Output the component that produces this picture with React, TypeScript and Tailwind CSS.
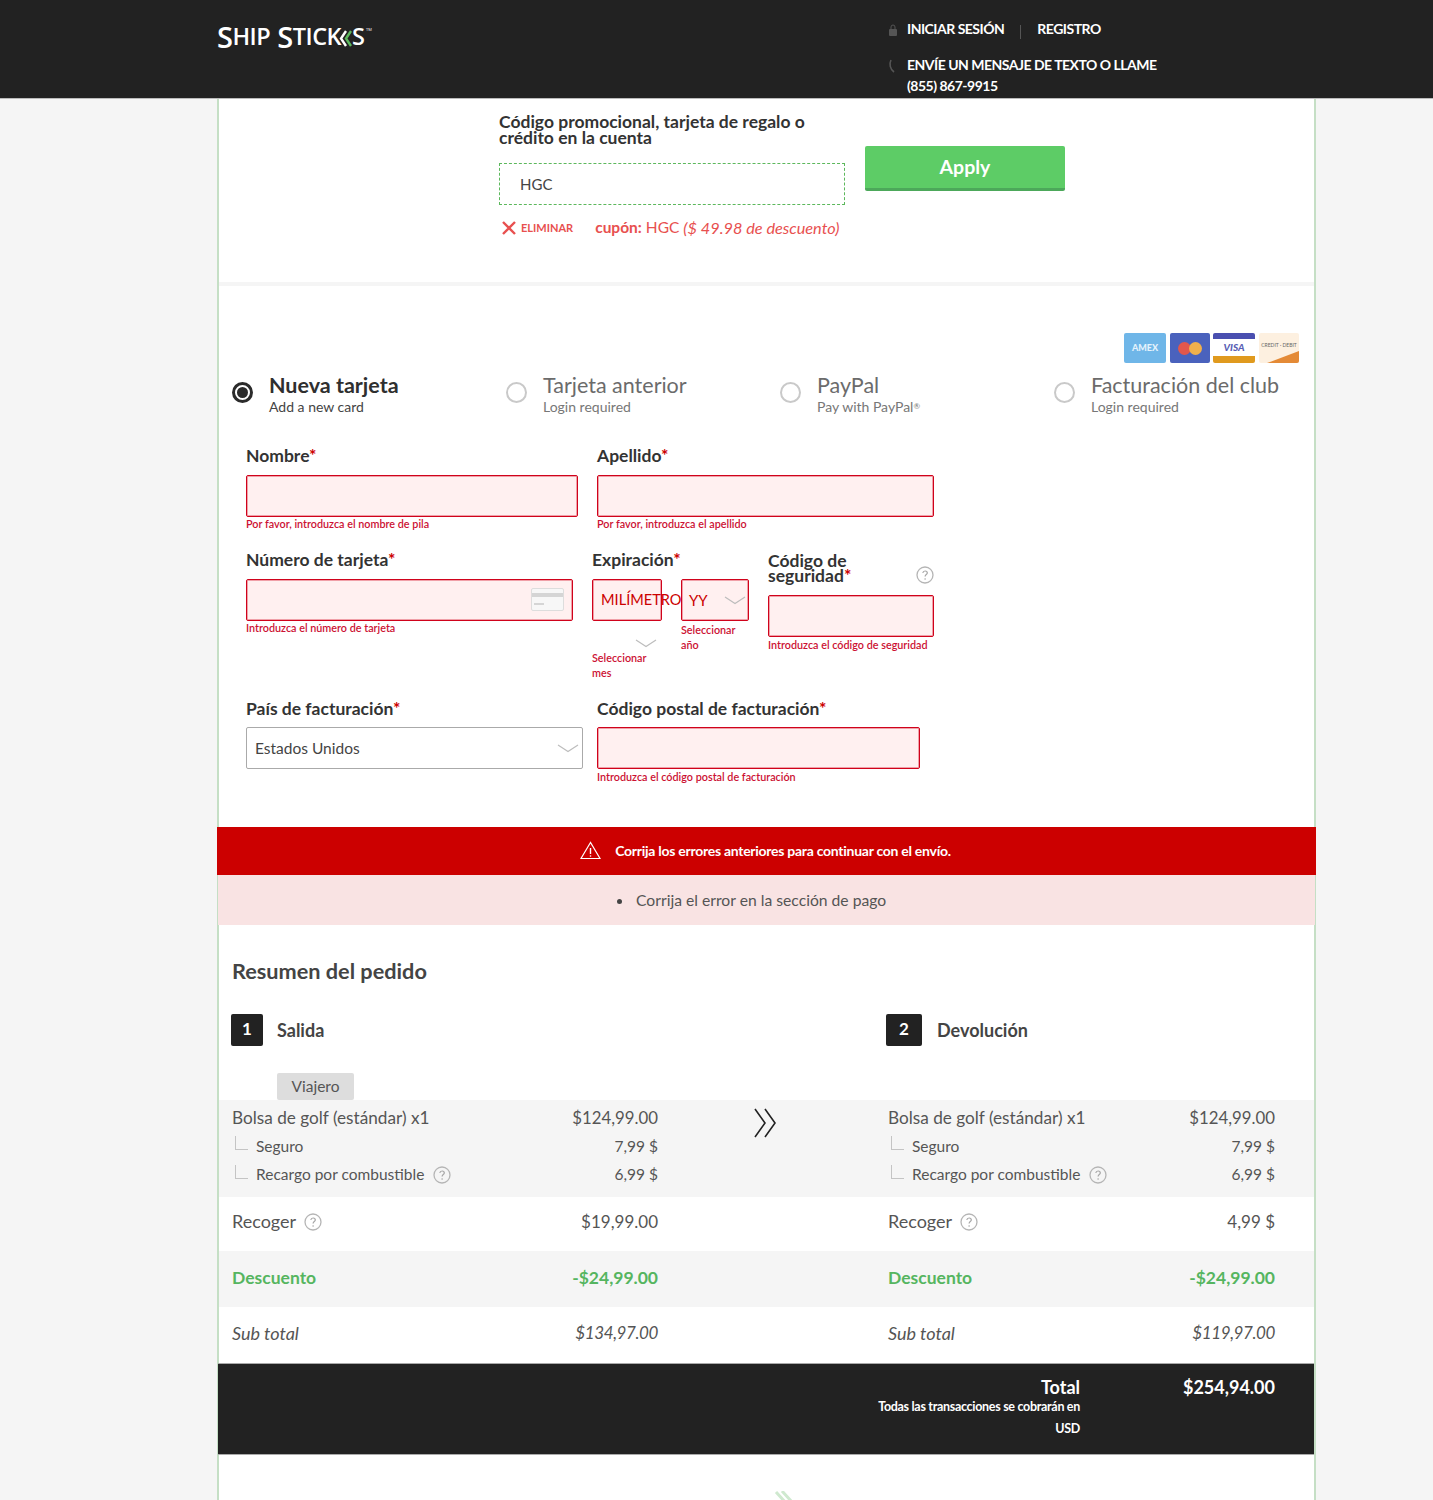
import React from 'react';

const font = { fontFamily: 'Lato, "Open Sans", sans-serif' };

const Help = ({ size = 18 }: { size?: number }) => (
  <svg width={size} height={size} viewBox="0 0 18 18" fill="none" className="shrink-0">
    <circle cx="9" cy="9" r="8" stroke="#b5b5b5" strokeWidth="1.3" />
    <path d="M6.8 7c.2-1.3 1.1-2 2.3-2 1.3 0 2.2.8 2.2 1.9 0 1.7-2.2 1.7-2.2 3.6" stroke="#a5a5a5" strokeWidth="1.2" />
    <circle cx="9.1" cy="13" r=".8" fill="#a5a5a5" />
  </svg>
);

const Caret = ({ className = '' }: { className?: string }) => (
  <svg width="22" height="9" viewBox="0 0 22 9" fill="none" className={className}>
    <path d="M1 1l10 6.5L21 1" stroke="#bdbdbd" strokeWidth="1.2" />
  </svg>
);

const Radio = ({ on, title, sub }: { on?: boolean; title: string; sub: React.ReactNode }) => (
  <div className="flex w-[274px] shrink-0 items-start last:w-auto">
    <div className="mt-[8px] flex h-[22px] w-[22px] shrink-0 items-center justify-center">
      {on ? (
        <span className="flex h-[21px] w-[21px] items-center justify-center rounded-full border-[3px] border-[#2b2b2b]">
          <span className="h-[11px] w-[11px] rounded-full bg-[#2b2b2b]" />
        </span>
      ) : (
        <span className="h-[21px] w-[21px] rounded-full border-2 border-[#c9c9c9]" />
      )}
    </div>
    <div className="ml-[16px]">
      <div className={on ? 'text-[21.5px] leading-[24px] font-bold text-[#2f2f2f]' : 'text-[21.5px] leading-[24px] text-[#6b6b6b]'}>{title}</div>
      <div className={on ? 'mt-[2px] h-[16px] text-[14px] leading-[16px] text-[#444]' : 'mt-[2px] h-[16px] text-[14px] leading-[16px] text-[#777]'}>{sub}</div>
    </div>
  </div>
);

const Label = ({ children, className = '' }: { children: React.ReactNode; className?: string }) => (
  <div className={`text-[17.5px] leading-[15px] font-bold text-[#333] ${className}`}>
    {children}
    <span className="text-[#cc0000]">*</span>
  </div>
);

const Err = ({ children, className = '' }: { children: React.ReactNode; className?: string }) => (
  <div className={`text-[10.8px] leading-[15px] font-semibold text-[#cc1133] ${className}`}>{children}</div>
);

const BadInput = ({ className = '', children }: { className?: string; children?: React.ReactNode }) => (
  <div className={`relative h-[42px] rounded-[2px] border border-[#d0021b] bg-[#fff0f0] shadow-[inset_0_0_0_1px_#f0a0a8] ${className}`}>{children}</div>
);

const Row = ({ left, right, mid, className = '' }: { left: React.ReactNode; right: React.ReactNode; mid?: React.ReactNode; className?: string }) => (
  <div className={`flex items-start pl-[13px] ${className}`}>
    <div className="w-[426px]">{left}</div>
    <div className="flex w-[230px] justify-center pr-[16px]">{mid}</div>
    <div className="w-[387px]">{right}</div>
  </div>
);

const Line = ({ label, value, cls = '' }: { label: React.ReactNode; value: string; cls?: string }) => (
  <div className={`flex items-center justify-between ${cls}`}>
    <div className="flex items-center">{label}</div>
    <div>{value}</div>
  </div>
);

const Elbow = () => (
  <span className="mr-[8px] mb-[7px] ml-[3px] inline-block h-[14px] w-[13px] border-b border-l border-[#c4c4c4]" />
);

const Bag = () => (
  <div className="text-[#555]">
    <Line label={<span className="text-[17.2px]">Bolsa de golf (estándar) x1</span>} value="$124,99.00" cls="h-[36px] text-[16.8px]" />
    <Line label={<><Elbow />Seguro</>} value="7,99 $" cls="h-[21px] text-[15.5px]" />
    <Line label={<><Elbow />Recargo por combustible<span className="ml-[9px]"><Help /></span></>} value="6,99 $" cls="h-[36px] text-[15.5px]" />
  </div>
);

const Pickup = ({ value }: { value: string }) => (
  <Line label={<><span className="text-[18px]">Recoger</span><span className="ml-[8px]"><Help /></span></>} value={value} cls="h-[49px] text-[17px] text-[#555]" />
);

const Discount = () => (
  <Line label="Descuento" value="-$24,99.00" cls="h-[54px] text-[17.5px] font-bold text-[#55b560]" />
);

const Sub = ({ value }: { value: string }) => (
  <Line label={<span className="text-[18px] tracking-normal">Sub total</span>} value={value} cls="h-[52px] text-[17px] tracking-[-0.4px] italic text-[#555]" />
);

const Step = ({ n, label, box = 'w-[32px]' }: { n: string; label: string; box?: string }) => (
  <div className="flex items-center">
    <span className={`flex h-[32px] items-center justify-center rounded-[2px] bg-[#222] pb-[3px] text-[17px] font-bold text-white ${box}`}>{n}</span>
    <span className="mt-[1px] ml-[14px] text-[18px] font-bold text-[#444]">{label}</span>
  </div>
);

const Logo = () => (
  <div className="flex items-center text-white" style={{ fontFamily: '"Open Sans", sans-serif' }}>
    <span className="text-[29px] leading-none font-semibold tracking-[-0.5px]">S</span>
    <span className="text-[23.5px] leading-none font-semibold tracking-[-0.5px]">HIP</span>
    <span className="ml-[7px] text-[29px] leading-none font-semibold tracking-[-0.5px]">S</span>
    <span className="text-[23.5px] leading-none font-semibold tracking-[-0.5px]">TICK</span>
    <svg width="13" height="17" viewBox="0 0 13 17" fill="none" className="mt-[3px] -ml-[2px]">
      <path d="M7 1L2 8.5 7 16" stroke="#fff" strokeWidth="2.4" />
      <path d="M12 1L7 8.5l5 7.5" stroke="#5cb85c" strokeWidth="2.4" />
    </svg>
    <span className="text-[23.5px] leading-none font-semibold">S</span>
    <span className="mb-[14px] ml-[1px] text-[4px] leading-none">TM</span>
  </div>
);

const Cards = () => (
  <div className="flex justify-end pr-[15px]">
    <div className="flex h-[30px] w-[42px] items-center justify-center rounded-[2px] bg-[#6fb6e8] text-[9px] font-black text-[#e4f2fc]">AMEX</div>
    <div className="ml-[4px] flex h-[30px] w-[40px] items-center justify-center rounded-[2px] bg-[#4a62bd]">
      <span className="h-[13px] w-[13px] rounded-full bg-[#e2574c]" />
      <span className="-ml-[2px] h-[13px] w-[13px] rounded-full bg-[#f0b04c]" />
    </div>
    <div className="ml-[3px] flex h-[30px] w-[42px] flex-col overflow-hidden rounded-[2px]">
      <span className="h-[6px] bg-[#4a4fb0]" />
      <span className="flex flex-1 items-center justify-center bg-white text-[10px] font-black text-[#5a5fb5] italic">VISA</span>
      <span className="h-[7px] bg-[#e09a1e]" />
    </div>
    <div className="relative ml-[4px] flex h-[30px] w-[40px] justify-center overflow-hidden rounded-[2px] bg-[#fdf0e0] pt-[9px] text-[5px] leading-[6px] text-[#666]">
      CREDIT · DEBIT
      <svg width="40" height="16" viewBox="0 0 40 16" className="absolute right-0 bottom-0">
        <path d="M8 16L40 4v12z" fill="#e48a36" />
      </svg>
    </div>
  </div>
);

export default function App() {
  return (
    <div className="min-h-[1500px] overflow-hidden bg-[#f5f5f5]" style={font}>
      <header className="flex h-[99px] justify-between border-b border-[#bbb] bg-[#222] pl-[217px] text-white">
        <div className="pt-[22px]"><Logo /></div>
        <div className="w-[546px] text-[14px] font-bold tracking-[-0.5px]">
          <div className="mt-[20px] flex h-[17px] items-center">
            <svg width="10" height="12" viewBox="0 0 10 12" className="mt-[3px] mr-[9px] ml-[1px]">
              <rect x="1" y="5" width="8" height="7" rx="1" fill="#555" />
              <path d="M3 5V3a2 2 0 014 0v2" stroke="#555" fill="none" />
            </svg>
            <span>INICIAR SESIÓN</span>
            <span className="mx-[16px] mt-[7px] h-[14px] w-px bg-[#555]" />
            <span>REGISTRO</span>
          </div>
          <div className="mt-[19px] flex h-[17px] items-center">
            <svg width="10" height="14" viewBox="0 0 10 14" fill="none" className="mt-[2px] mr-[9px] ml-[1px]">
              <path d="M3 1C1 5 2 10 6 13" stroke="#555" strokeWidth="1.6" />
            </svg>
            <span>ENVÍE UN MENSAJE DE TEXTO O LLAME</span>
          </div>
          <div className="mt-[4px] pl-[20px] leading-[18px]">(855) 867-9915</div>
        </div>
      </header>

      <main className="mx-[217px] h-[1401px] w-[1099px] border-x-2 border-[#c5dfc5] bg-white">
        {/* cupon */}
        <section className="flex h-[187px] border-b-4 border-[#f5f5f5] pl-[280px]">
          <div className="w-[346px] pt-[15px]">
            <div className="text-[17.5px] leading-[16px] font-bold text-[#333]">Código promocional, tarjeta de regalo o crédito en la cuenta</div>
            <div className="mt-[17px] flex h-[42px] items-center border border-dashed border-[#5cb85c] pl-[20px] text-[15px] text-[#444]">HGC</div>
            <div className="mt-[13px] flex h-[20px] items-center text-[15.5px] whitespace-nowrap text-[#e8504f]">
              <svg width="16" height="16" viewBox="0 0 16 16" fill="none" className="ml-[2px]">
                <path d="M2 2l12 12M14 2L2 14" stroke="#e8504f" strokeWidth="2.4" />
              </svg>
              <span className="ml-[4px] text-[11px] font-bold">ELIMINAR</span>
              <span className="ml-[22px] font-bold">cupón:</span>
              <span className="ml-[4px]">HGC</span>
              <span className="ml-[4px] text-[16.3px] italic">($ 49.98 de descuento)</span>
            </div>
          </div>
          <div className="mt-[47px] ml-[20px] flex h-[45px] w-[200px] items-center justify-center rounded-[2px] border-b-[3px] border-[#4ca85a] bg-[#5dcc66] text-[19.5px] font-bold text-white">Apply</div>
        </section>

        {/* pago */}
        <section className="h-[541px] pt-[47px]">
          <Cards />
          <div className="mt-[10px] flex pl-[12px]">
            <Radio on title="Nueva tarjeta" sub="Add a new card" />
            <Radio title="Tarjeta anterior" sub="Login required" />
            <Radio title="PayPal" sub={<>Pay with PayPal<span className="relative -top-[3px] text-[8px]">®</span></>} />
            <Radio title="Facturación del club" sub="Login required" />
          </div>

          <div className="mt-[33px] flex pl-[27px]">
            <div className="w-[332px]">
              <Label className="h-[27px]">Nombre</Label>
              <BadInput />
              <Err className="-mt-[1px]">Por favor, introduzca el nombre de pila</Err>
            </div>
            <div className="ml-[19px] w-[337px]">
              <Label className="h-[27px]">Apellido</Label>
              <BadInput />
              <Err className="-mt-[1px]">Por favor, introduzca el apellido</Err>
            </div>
          </div>

          <div className="mt-[21px] flex pl-[27px]">
            <div className="w-[327px]">
              <Label className="h-[27px]">Número de tarjeta</Label>
              <BadInput>
                <div className="absolute top-[8px] right-[8px] h-[23px] w-[33px] rounded-[2px] border border-[#ddd] bg-[#f7f7f7]">
                  <div className="mt-[4px] h-[4px] bg-[#d5d5d5]" />
                  <div className="mt-[6px] ml-[2px] h-[2px] w-[10px] bg-[#d5d5d5]" />
                </div>
              </BadInput>
              <Err className="-mt-[1px]">Introduzca el número de tarjeta</Err>
            </div>
            <div className="ml-[19px] flex w-[157px] flex-col">
              <Label className="h-[27px]">Expiración</Label>
              <div className="flex items-start">
                <div className="w-[70px]">
                  <BadInput className="flex items-center pl-[8px] text-[14.6px] whitespace-nowrap text-[#cc0000]">MILÍMETRO</BadInput>
                  <div className="flex justify-end pt-[18px] pr-[5px]"><Caret /></div>
                  <Err className="mt-[2px]">Seleccionar mes</Err>
                </div>
                <div className="ml-[19px] w-[68px]">
                  <BadInput className="flex items-center justify-between pr-[2px] pl-[7px] text-[15px] text-[#cc0000]">YY<Caret /></BadInput>
                  <Err className="mt-[1px]">Seleccionar año</Err>
                </div>
              </div>
            </div>
            <div className="ml-[19px] w-[166px]">
              <div className="flex h-[43px] items-center justify-between">
                <Label className="-mt-[11px] w-[110px]">Código de seguridad</Label>
                <span className="mt-[2px]"><Help /></span>
              </div>
              <BadInput />
              <Err>Introduzca el código de seguridad</Err>
            </div>
          </div>

          <div className="mt-[21px] flex pl-[27px]">
            <div className="w-[337px]">
              <Label className="h-[26px]">País de facturación</Label>
              <div className="flex h-[42px] items-center justify-between rounded-[2px] border border-[#aaa] pt-[1px] pr-[3px] pl-[8px] text-[15.5px] text-[#444]">Estados Unidos<Caret /></div>
            </div>
            <div className="ml-[14px] w-[323px]">
              <Label className="h-[26px]">Código postal de facturación</Label>
              <BadInput />
              <Err>Introduzca el código postal de facturación</Err>
            </div>
          </div>
        </section>

        {/* errores */}
        <div className="-mx-[2px] flex h-[48px] items-center justify-center bg-[#cc0000] pr-[2px] pb-[1px] text-[14px] font-bold tracking-[-0.27px] text-white">
          <svg width="21" height="19" viewBox="0 0 21 19" fill="none" className="mr-[14px]">
            <path d="M10.5 1.5L1 17.5h19z" stroke="#fff" strokeWidth="1.2" />
            <path d="M10.5 7v6" stroke="#fff" strokeWidth="1.4" />
            <circle cx="10.5" cy="15" r=".8" fill="#fff" />
          </svg>
          Corrija los errores anteriores para continuar con el envío.
        </div>
        <div className="-mx-[1px] flex h-[50px] items-center bg-[#f9e3e3] pt-[2px] pl-[399px] text-[15.7px] text-[#555]">
          <span className="mr-[14px] h-[5px] w-[5px] rounded-full bg-[#444]" />
          Corrija el error en la sección de pago
        </div>

        {/* resumen */}
        <section>
          <h2 className="pt-[32px] pl-[13px] text-[21.7px] leading-[28px] font-bold text-[#444]">Resumen del pedido</h2>
          <div className="mt-[29px] flex pl-[12px]">
            <div className="w-[655px]"><Step n="1" label="Salida" /></div>
            <Step n="2" label="Devolución" box="mr-[1px] w-[36px]" />
          </div>
          <div className="mt-[27px] ml-[58px] flex h-[27px] w-[77px] items-center justify-center rounded-[2px] bg-[#ddd] pt-[1px] text-[15.5px] text-[#555]">Viajero</div>

          <Row
            className="h-[97px] bg-[#f5f5f5]"
            left={<Bag />}
            right={<Bag />}
            mid={
              <svg width="24" height="30" viewBox="0 0 24 30" fill="none" className="mt-[8px]">
                <path d="M2 1l10 14L2 29M12 1l10 14-10 14" stroke="#222" strokeWidth="1.6" />
              </svg>
            }
          />
          <Row left={<Pickup value="$19,99.00" />} right={<Pickup value="4,99 $" />} className="h-[54px]" />
          <Row left={<Discount />} right={<Discount />} className="h-[56px] items-center bg-[#f5f5f5]" />
          <Row left={<Sub value="$134,97.00" />} right={<Sub value="$119,97.00" />} className="h-[56px] items-center" />

          <div className="-ml-[1px] flex h-[92px] justify-end border-y border-[#aaa] bg-[#222] pt-[13px] pr-[39px] text-white">
            <div className="w-[205px] text-right">
              <div className="text-[18px] leading-[20px] font-bold">Total</div>
              <div className="-mt-[1px] text-[12.5px] leading-[22px] font-bold tracking-[-0.3px]">Todas las transacciones se cobrarán en USD</div>
            </div>
            <div className="ml-[60px] w-[135px] text-right text-[18px] leading-[20px] font-bold">$254,94.00</div>
          </div>

          <div className="flex justify-center pt-[36px] pl-[39px]">
            <svg width="24" height="11" viewBox="0 0 24 11" fill="none">
              <path d="M2 1l10 11M8 0l10 11" stroke="#cfe9cf" strokeWidth="3" />
            </svg>
          </div>
        </section>
      </main>
    </div>
  );
}
